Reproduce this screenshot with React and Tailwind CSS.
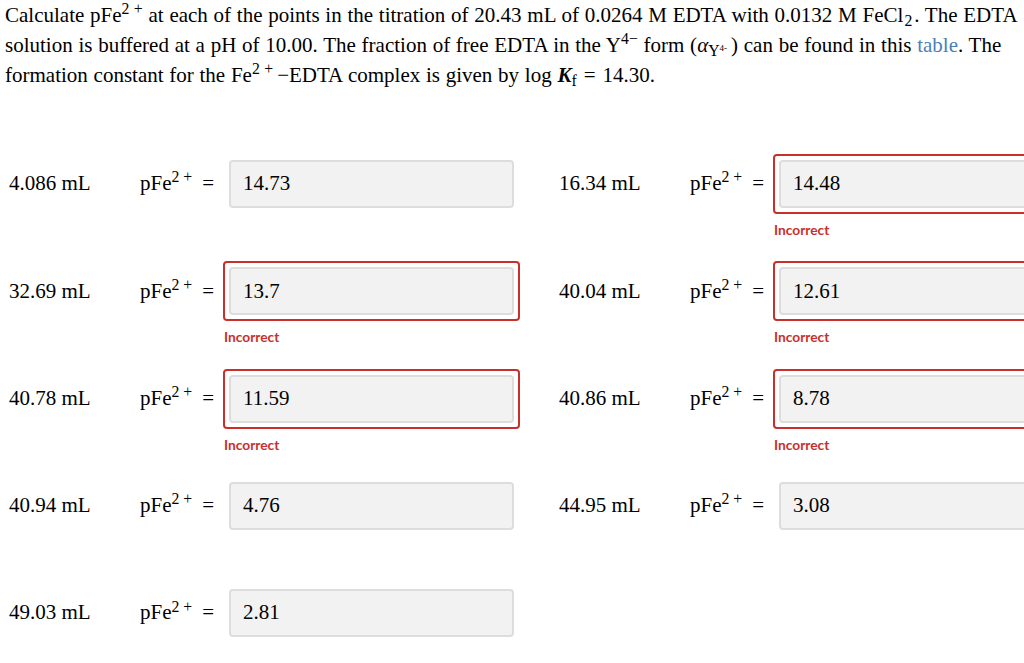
import React from "react";

const rows = [
  [
    { vol: "4.086 mL", value: "14.73", wrong: false },
    { vol: "16.34 mL", value: "14.48", wrong: true },
  ],
  [
    { vol: "32.69 mL", value: "13.7", wrong: true },
    { vol: "40.04 mL", value: "12.61", wrong: true },
  ],
  [
    { vol: "40.78 mL", value: "11.59", wrong: true },
    { vol: "40.86 mL", value: "8.78", wrong: true },
  ],
  [
    { vol: "40.94 mL", value: "4.76", wrong: false },
    { vol: "44.95 mL", value: "3.08", wrong: false },
  ],
  [{ vol: "49.03 mL", value: "2.81", wrong: false }],
];

const Answer = ({ vol, value, wrong }) => (
  <div className="flex items-start h-[107.3px]">
    <div className="h-[60px] w-[140px] pl-[9px] flex items-center">{vol}</div>
    <div className="h-[60px] w-[83px] flex items-center">
      <span>
        pFe<sup>2 +</sup>
      </span>
      <span className="ml-[10px]">=</span>
    </div>
    <div className="flex flex-col">
      <div
        className={`border-2 p-[4px] rounded-[4px] ${
          wrong ? "border-[#c9302c]" : "border-transparent"
        }`}
      >
        <div className="h-[48px] w-[285px] pl-[12px] flex items-center bg-[#f2f2f2] border-2 border-[#dddddd] rounded-[4px] font-['Liberation_Serif',serif] text-[21px]">
          {value}
        </div>
      </div>
      {wrong && (
        <div className="mt-[8px] pl-[1px] text-[13.75px] leading-[16px] font-bold text-[#c9302c] font-['Lato',sans-serif]">
          Incorrect
        </div>
      )}
    </div>
  </div>
);

export default function App() {
  return (
    <div className="w-[1024px] h-[663px] overflow-hidden bg-white text-black font-['Liberation_Serif',serif] text-[21px]">
      <p className="px-[5px] leading-[30px] [word-spacing:0.5px]">
        Calculate pFe<sup>2 +</sup> at each of the points in the titration of
        20.43 mL of 0.0264 M EDTA with 0.0132 M FeCl<sub className="ml-[1px] mr-[2px]">2</sub>. The EDTA
        solution is buffered at a pH of 10.00. The fraction of free EDTA in
        the Y<sup>4−</sup> form (
        <i>α</i>
        <sub>
          Y<sup className="text-[9px]">4-</sup>
        </sub>
        <span className="ml-[4px]">)</span> can be found in this{" "}
        <span className="text-[#4b80b9]">table</span>. The formation constant
        for the Fe<sup>2 +</sup>
        <span className="ml-[4px]">−EDTA</span> complex is given by log{" "}
        <b>
          <i>K</i>
        </b>
        <sub>f</sub>
        <span className="mx-[7px]">=</span>14.30.
      </p>

      <div className="mt-[64px] grid grid-cols-[550px_550px]">
        {rows.flat().map((r) => (
          <Answer key={r.vol} {...r} />
        ))}
      </div>
    </div>
  );
}
